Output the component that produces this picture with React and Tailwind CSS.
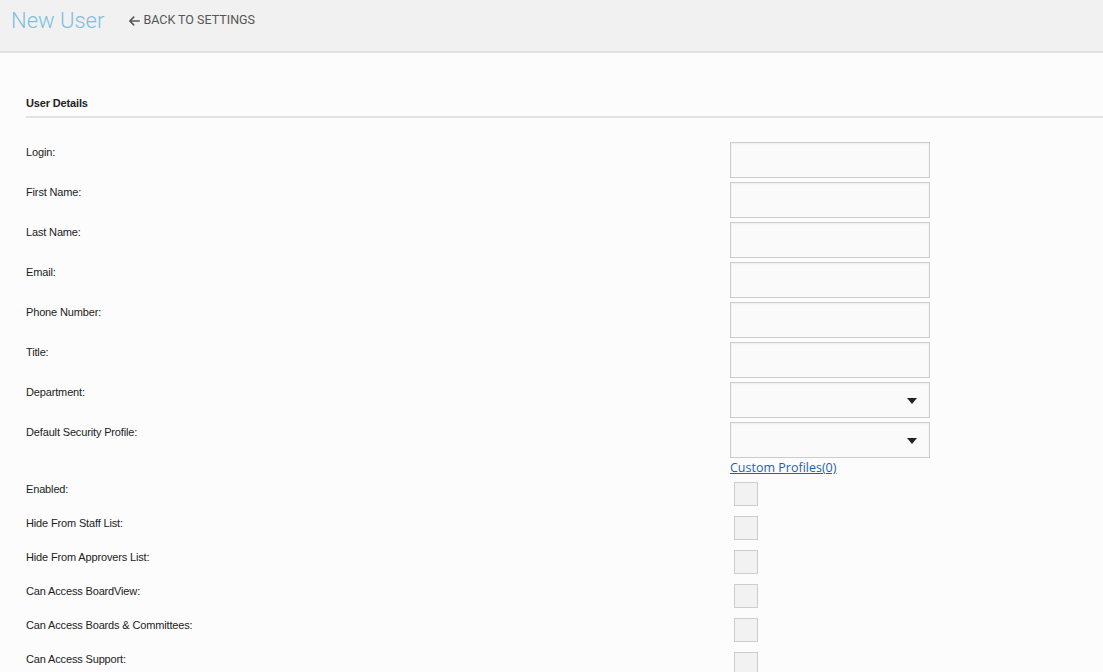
import React from "react";

const textFields = ["Login:", "First Name:", "Last Name:", "Email:", "Phone Number:", "Title:"];
const checkFields = [
  "Enabled:",
  "Hide From Staff List:",
  "Hide From Approvers List:",
  "Can Access BoardView:",
  "Can Access Boards & Committees:",
  "Can Access Support:",
];

const Caret = () => (
  <svg width="10" height="6" viewBox="0 0 10 6" className="absolute right-[12px] top-[15px]">
    <path d="M0 0 L10 0 L5 6 Z" fill="#222" />
  </svg>
);

const FieldRow = ({ label, select }) => (
  <div className="flex">
    <div className="w-[704px] pt-[2px] leading-[16px]">{label}</div>
    <div className="relative w-[200px] h-[36px] mb-[4px] border border-[#cccccc] bg-[#fafafa] shadow-[inset_0_1px_2px_rgba(0,0,0,0.05)]">
      {select && <Caret />}
    </div>
  </div>
);

const CheckRow = ({ label }) => (
  <div className="flex h-[34px]">
    <div className="w-[704px] pt-[3px] leading-[16px]">{label}</div>
    <div className="mt-[4px] ml-[4px] w-[24px] h-[24px] border border-[#cccccc] bg-[#f2f2f2]" />
  </div>
);

export default function App() {
  return (
    <div className="min-h-[672px] bg-[#fcfcfc] text-[#222] font-['Liberation_Sans',Arial,sans-serif]">
      <div className="h-[53px] bg-[#f1f1f1] border-b-2 border-[#e2e2e2] flex items-center pl-[11px] pb-[10px]">
        <span className="font-['Roboto',sans-serif] font-light text-[22px] text-[#7dbfe2] leading-none">New User</span>
        <a className="ml-[25px] flex items-center text-[12.5px] text-[#555] font-['Roboto',sans-serif]">
          <svg width="11" height="12" viewBox="0 0 448 448" className="mr-[3px]">
            <path
              fill="#555"
              d="M9.4 201.4c-12.5 12.5-12.5 32.8 0 45.3l160 160c12.5 12.5 32.8 12.5 45.3 0s12.5-32.8 0-45.3L109.2 256 416 256c17.7 0 32-14.3 32-32s-14.3-32-32-32l-306.7 0L214.6 86.6c12.5-12.5 12.5-32.8 0-45.3s-32.8-12.5-45.3 0l-160 160z"
            />
          </svg>
          BACK TO SETTINGS
        </a>
      </div>

      <div className="pl-[26px] text-[11px] tracking-[-0.15px]">
        <div className="pt-[43px] pb-[6px] border-b-2 border-[#e2e2e2] font-bold text-[11px] leading-[14px] text-[#222]">
          User Details
        </div>

        <div className="pt-[24px]">
          {textFields.map((f) => (
            <FieldRow key={f} label={f} />
          ))}
          <FieldRow label="Department:" select />
          <div className="flex">
            <div className="w-[704px] pt-[2px] leading-[16px]">Default Security Profile:</div>
            <div className="w-[200px]">
              <div className="relative w-[200px] h-[36px] border border-[#cccccc] bg-[#fafafa] shadow-[inset_0_1px_2px_rgba(0,0,0,0.05)]">
                <Caret />
              </div>
              <a className="block pt-[1px] text-[12.5px] tracking-normal leading-[18px] text-[#1f5fae] underline font-['Open_Sans',sans-serif]">
                Custom Profiles(0)
              </a>
            </div>
          </div>
          <div className="pt-[1px]">
            {checkFields.map((f) => (
              <CheckRow key={f} label={f} />
            ))}
          </div>
        </div>
      </div>
    </div>
  );
}
